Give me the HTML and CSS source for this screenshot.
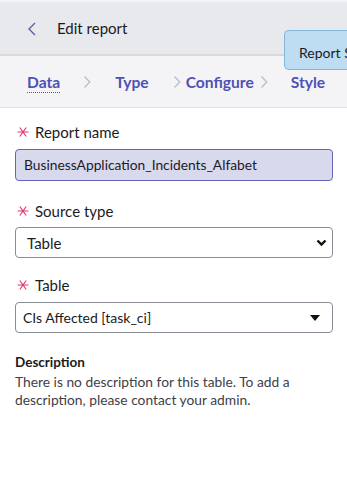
FILE: index.html
```html
<!DOCTYPE html>
<html>
<head>
<meta charset="utf-8">
<link rel="stylesheet" href="styles.css">
</head>
<body>
<div class="page">
  <header class="topbar">
    <button class="back" aria-label="Back">
      <svg width="10" height="14" viewBox="0 0 10 14"><path d="M8 1 L2 7 L8 13" fill="none" stroke="#5a5fa8" stroke-width="1.4"/></svg>
    </button>
    <h1 class="title">Edit report</h1>
  </header>
  <nav class="steps">
    <span class="step active">Data</span>
    <svg class="sep sep1" width="8" height="12" viewBox="0 0 8 12"><path d="M1.5 0.5 L6.8 6 L1.5 11.5" fill="none" stroke="#b8bccc" stroke-width="1.3"/></svg>
    <span class="step">Type</span>
    <svg class="sep sep2" width="8" height="12" viewBox="0 0 8 12"><path d="M1.5 0.5 L6.8 6 L1.5 11.5" fill="none" stroke="#b8bccc" stroke-width="1.3"/></svg>
    <span class="step">Configure</span>
    <svg class="sep sep3" width="8" height="12" viewBox="0 0 8 12"><path d="M1.5 0.5 L6.8 6 L1.5 11.5" fill="none" stroke="#b8bccc" stroke-width="1.3"/></svg>
    <span class="step">Style</span>
  </nav>
  <div class="tooltip">Report Saved</div>
  <main class="form">
    <div class="field">
      <label class="label"><svg class="req" width="12" height="12" viewBox="0 0 12 12"><path d="M0.5 6 H11.5 M2.8 1.5 L9.2 10.5 M9.2 1.5 L2.8 10.5" stroke="#e5396b" stroke-width="1.2" fill="none"/></svg>Report name</label>
      <div class="input">BusinessApplication_Incidents_Alfabet</div>
    </div>
    <div class="field f2">
      <label class="label"><svg class="req" width="12" height="12" viewBox="0 0 12 12"><path d="M0.5 6 H11.5 M2.8 1.5 L9.2 10.5 M9.2 1.5 L2.8 10.5" stroke="#e5396b" stroke-width="1.2" fill="none"/></svg>Source type</label>
      <div class="select native"><span class="val">Table</span>
        <svg width="11" height="8" viewBox="0 0 11 8"><path d="M1.5 1.5 L5.5 5.5 L9.5 1.5" fill="none" stroke="#111" stroke-width="2.4"/></svg>
      </div>
    </div>
    <div class="field f3">
      <label class="label"><svg class="req" width="12" height="12" viewBox="0 0 12 12"><path d="M0.5 6 H11.5 M2.8 1.5 L9.2 10.5 M9.2 1.5 L2.8 10.5" stroke="#e5396b" stroke-width="1.2" fill="none"/></svg>Table</label>
      <div class="select custom"><span class="val">CIs Affected [task_ci]</span>
        <svg width="10" height="6" viewBox="0 0 10 6"><path d="M0 0 L10 0 L5 6 Z" fill="#111"/></svg>
      </div>
    </div>
    <div class="desc">
      <h2 class="desc-title">Description</h2>
      <p class="desc-text">There is no description for this table. To add a description, please contact your admin.</p>
    </div>
  </main>
</div>
</body>
</html>
```
FILE: styles.css
```css
* { box-sizing: border-box; }
html, body { margin: 0; padding: 0; background: #fff; }
body { font-family: Lato, "Open Sans", sans-serif; color: #1b1b1f; width: 347px; height: 490px; overflow: hidden; }
.page { position: relative; }
.topbar {
  height: 56px;
  background: #e8e9ed;
  border-top: 2px solid #f3f3f5;
  border-bottom: 2px solid #d9dadf;
  display: flex;
  align-items: center;
  padding-left: 27px;
}
.back { background: none; border: 0; padding: 0; margin: 0; width: 10px; height: 14px; display: flex; margin-top: 2px; }
.title { font-size: 15px; font-weight: 400; margin: 0 0 0 20px; color: #1b1b1f; }
.steps {
  height: 52px;
  background: #f4f4f7;
  border-bottom: 1px solid #e2e2e6;
  display: flex;
  align-items: center;
  padding-left: 27px;
  font-size: 15.6px;
  font-weight: 700;
  color: #4e51b5;
  white-space: nowrap;
}
.step.active { border-bottom: 1px dotted #4e51b5; padding-bottom: 1px; margin-top: 2px; }
.sep { flex: none; }
.sep1 { margin: 0 24px 0 23px; }
.sep2 { margin: 0 5px 0 24px; }
.sep3 { margin: 0 23px 0 6px; }
.tooltip {
  position: absolute;
  left: 284px;
  top: 30px;
  width: 63px;
  height: 40px;
  overflow: hidden;
  background: #bedcf2;
  border: 1px solid #83b5dd;
  border-right: 0;
  border-radius: 5px 0 0 5px;
  font-size: 14px;
  padding: 13px 0 0 14px;
  color: #1b1b1f;
  white-space: nowrap;
}
.form { padding: 14px 14px 0 15px; }
.field { margin-bottom: 20px; }
.f2 { margin-bottom: 17px; }
.label { display: flex; align-items: center; font-size: 15px; line-height: 20px; height: 20px; margin-bottom: 7px; color: #1b1b1f; }
.f2 .label { margin-bottom: 6px; }
.req { flex: none; margin: 0 6px 0 2px; }
.input {
  height: 32px;
  background: #d9d9ee;
  border: 1px solid #6565b8;
  border-radius: 4px;
  font-size: 13.8px;
  line-height: 20px;
  padding: 5px 8px;
  color: #1b1b1f;
}
.select {
  height: 31px;
  border: 1px solid #8a8d96;
  border-radius: 4px;
  display: flex;
  align-items: center;
  justify-content: space-between;
  font-size: 14px;
}
.native { padding: 0 5px 0 11px; font-size: 15px; }
.custom { padding: 0 12px 0 7px; }
.desc { margin-top: 18px; }
.desc-title { font-size: 13.5px; line-height: 18px; font-weight: 700; margin: 0 0 2px; color: #1b1b1f; }
.desc-text { font-size: 13.8px; line-height: 18px; margin: 0; color: #404048; }
```
